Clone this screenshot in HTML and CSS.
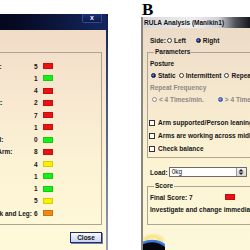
FILE: index.html
```html
<!DOCTYPE html>
<html lang="en">
<head>
    <meta charset="UTF-8">
    <meta name="viewport" content="width=device-width, initial-scale=1.0">
    <title>RULA Analysis</title>
    <link rel="stylesheet" href="styles.css">
</head>
<body>
    <div class="page">
        <div class="details-win">
            <div class="details-title">
                <span class="details-close">x</span>
            </div>
            <div class="details-body">
                <div class="details-group">
                    <div class="score-grid">
                        <span>Upper Arm:</span><span>5</span><span class="swatch red"></span>
                        <span>Forearm:</span><span>1</span><span class="swatch green"></span>
                        <span>Wrist:</span><span>4</span><span class="swatch red"></span>
                        <span>Wrist Twist:</span><span>2</span><span class="swatch red"></span>
                        <span>Posture A:</span><span>7</span><span class="swatch red"></span>
                        <span>Muscle:</span><span>1</span><span class="swatch red"></span>
                        <span>Force/Load:</span><span>0</span><span class="swatch green"></span>
                        <span>Wrist and Arm:</span><span>8</span><span class="swatch red"></span>
                        <span>Neck:</span><span>4</span><span class="swatch yellow"></span>
                        <span>Trunk:</span><span>1</span><span class="swatch green"></span>
                        <span>Leg:</span><span>1</span><span class="swatch green"></span>
                        <span>Posture B:</span><span>5</span><span class="swatch yellow"></span>
                        <span>Neck, Trunk and Leg:</span><span>6</span><span class="swatch orange"></span>
                    </div>
                </div>
                <div class="details-actions">
                    <button class="btn-close">Close</button>
                </div>
            </div>
        </div>

        <div class="panel-b">
            <div class="fig-label">B</div>
            <div class="rula-win">
                <div class="rula-title">RULA Analysis (Manikin1)</div>
                <div class="rula-body">
                    <div class="row side-row">
                        <span class="side-label">Side:</span>
                        <span class="opt"><span class="radio"></span>Left</span>
                        <span class="opt"><span class="radio on"></span>Right</span>
                    </div>

                    <fieldset class="group">
                        <legend>Parameters</legend>
                        <div class="row">Posture</div>
                        <div class="row posture-row">
                            <span class="opt"><span class="radio on"></span>Static</span>
                            <span class="opt"><span class="radio"></span>Intermittent</span>
                            <span class="opt"><span class="radio"></span>Repeated</span>
                        </div>
                        <div class="row muted">Repeat Frequency</div>
                        <div class="row muted freq-row">
                            <span class="opt"><span class="radio"></span>&lt; 4 Times/min.</span>
                            <span class="opt"><span class="radio on"></span>&gt; 4 Times/min.</span>
                        </div>
                        <div class="checks">
                            <div class="row check"><span class="box"></span>Arm supported/Person leaning</div>
                            <div class="row check"><span class="box"></span>Arms are working across midline</div>
                            <div class="row check"><span class="box"></span>Check balance</div>
                        </div>
                    </fieldset>

                    <div class="row load-row">
                        <span>Load:</span>
                        <div class="spin-input">
                            <span class="spin-value">0kg</span>
                            <span class="spin-btns">
                                <svg width="8" height="8" viewBox="0 0 8 8">
                                    <path d="M4 1 L6.5 3.4 H1.5 Z" fill="#222"/>
                                    <path d="M4 7 L6.5 4.6 H1.5 Z" fill="#222"/>
                                </svg>
                            </span>
                        </div>
                    </div>

                    <fieldset class="group score">
                        <legend>Score</legend>
                        <div class="row">
                            <span class="final-text">Final Score: 7</span>
                            <span class="swatch red"></span>
                        </div>
                        <div class="row">Investigate and change immediately</div>
                    </fieldset>

                    <svg class="glow" width="22" height="18" viewBox="0 0 22 18">
                        <defs>
                            <radialGradient id="sun" cx="0.5" cy="0.5" r="0.5">
                                <stop offset="0" stop-color="#fffdf0"/>
                                <stop offset="0.45" stop-color="#fbe47a"/>
                                <stop offset="1" stop-color="#f6d27a" stop-opacity="0"/>
                            </radialGradient>
                        </defs>
                        <ellipse cx="10" cy="8" rx="13" ry="7" fill="url(#sun)"/>
                        <circle cx="9" cy="30" r="21" fill="#05070e" stroke="#3a7ee4" stroke-width="2.5"/>
                    </svg>
                </div>
            </div>
        </div>
    </div>
</body>
</html>
```

FILE: styles.css
```css
* {
    box-sizing: border-box;
}
body {
    margin: 0;
    background-color: #fff;
    font-family: "Liberation Sans", Arial, sans-serif;
    font-size: 6.5px;
    font-weight: bold;
    color: #161616;
}
.page {
    display: flex;
    align-items: flex-start;
    width: 250px;
    height: 250px;
    overflow: hidden;
}

/* left window: score details */
.details-win {
    flex: none;
    display: flex;
    flex-direction: column;
    width: 230px;
    height: 236px;
    margin-left: -122px;
    margin-top: 14px;
    border-right: 2px solid;
    border-image: linear-gradient(#0e1a50, #4a5888 40%, #9aa0b4) 1;
}
.details-title {
    display: flex;
    justify-content: flex-end;
    align-items: flex-start;
    height: 16px;
    background: linear-gradient(90deg, #01020a, #050a22 60%, #14265f);
}
.details-close {
    width: 20px;
    height: 9px;
    margin-right: 4px;
    border: 1px solid #34488a;
    border-top: none;
    border-radius: 0 0 2px 2px;
    background: linear-gradient(#1c2f70, #0d1a4c);
    color: #e8ecff;
    font-size: 7px;
    line-height: 7px;
    text-align: center;
}
.details-body {
    flex: 1;
    padding: 22px 4px 0 0;
    background: linear-gradient(#f1dcc6, #f7e6cf 25%, #fcf2d4 60%, #fefad9);
}
.details-group {
    display: grid;
    justify-content: end;
    padding: 7px 48px 5px 0;
    border: 1px solid #aca591;
}
.score-grid {
    display: grid;
    grid-template-columns: max-content 7px 10px;
    grid-auto-rows: 12.25px;
    column-gap: 2px;
    align-items: center;
    white-space: nowrap;
}
.swatch {
    display: inline-block;
    width: 10px;
    height: 6px;
    border: 1px solid rgba(0, 0, 0, 0.15);
}
.red { background-color: #e81212; }
.green { background-color: #16f016; }
.yellow { background-color: #f7f200; }
.orange { background-color: #ee8a14; }
.details-actions {
    display: flex;
    justify-content: flex-end;
    margin-top: 7px;
}
.btn-close {
    width: 32px;
    height: 11px;
    padding: 0;
    border: 1px solid #222c64;
    background: linear-gradient(#f8f9ff, #cad3f2);
    box-shadow: 1px 1px 0 #7580ae;
    font: inherit;
    color: #111;
    line-height: 9px;
}

/* right panel: RULA analysis */
.panel-b {
    flex: none;
    width: 150px;
    margin-left: 33px;
}
.fig-label {
    height: 17px;
    padding-left: 1px;
    font-family: "Liberation Serif", "Times New Roman", serif;
    font-size: 17px;
    line-height: 19px;
    color: #000;
}
.rula-win {
    display: flex;
    flex-direction: column;
    height: 233px;
    border-left: 2px solid #8a867c;
}
.rula-title {
    height: 11px;
    padding-left: 1px;
    line-height: 11px;
    white-space: nowrap;
    color: #111;
    background: linear-gradient(90deg, #d6d6da 0, #efefef 50px, #cfd1d6 76px, #50545e 92px, #111317 108px);
}
.rula-body {
    flex: 1;
    padding: 6px 0 0 7px;
    background: linear-gradient(#ecdbc7, #f5e7ce 30%, #fcf3d3 60%, #fdf8da);
}
.row {
    display: flex;
    align-items: center;
    height: 12px;
    white-space: nowrap;
}
.opt {
    display: inline-flex;
    align-items: center;
    margin-right: 3px;
}
.radio {
    flex: none;
    width: 5px;
    height: 5px;
    margin-right: 2px;
    border: 1px solid #3c3c3c;
    border-radius: 50%;
    background-color: #fff;
}
.radio.on {
    border-color: #0c1a5c;
    background: radial-gradient(circle at 35% 35%, #7d9ae0, #0c1a5c 70%);
}
.side-label {
    margin-right: 1px;
}
.side-row .opt {
    margin-right: 10px;
}
.posture-row .opt:first-child,
.freq-row .opt:first-child {
    margin-left: 1px;
}
.freq-row .opt:first-child {
    margin-left: 2px;
    margin-right: 14px;
}
.muted {
    color: #8d8984;
}
.muted .radio {
    border-color: #8a8a8a;
}
.muted .radio.on {
    border-color: #3a5aa8;
    background: radial-gradient(circle at 35% 35%, #a9c0f0, #3158b0 70%);
}
.group {
    min-width: 0;
    margin: 2px 0 0 -3px;
    padding: 1px 0 2px 2px;
    border: 1px solid #aba593;
}
.group legend {
    margin-left: 4px;
    padding: 0 1px;
    line-height: 8px;
}
.checks {
    margin-top: 11px;
}
.check {
    height: 13px;
}
.box {
    flex: none;
    width: 6px;
    height: 6px;
    margin: 0 3px 0 -1px;
    border: 1px solid #333;
    background-color: #fff;
}
.load-row {
    margin-top: 8px;
}
.spin-input {
    display: flex;
    width: 78px;
    height: 10px;
    margin-left: 1px;
    border: 1px solid #6b6b6b;
    background-color: #fff;
}
.spin-value {
    flex: 1;
    padding-left: 2px;
    font-weight: normal;
    line-height: 8px;
}
.spin-btns {
    display: flex;
    align-items: center;
    justify-content: center;
    width: 10px;
    border-left: 1px solid #9a9a9a;
    background: linear-gradient(#f4f4f4, #d6d6d6);
}
.score {
    margin-top: 4px;
    padding-bottom: 9px;
}
.final-text {
    width: 75px;
}
.glow {
    display: block;
    margin: 7px 0 0 -7px;
}
```
